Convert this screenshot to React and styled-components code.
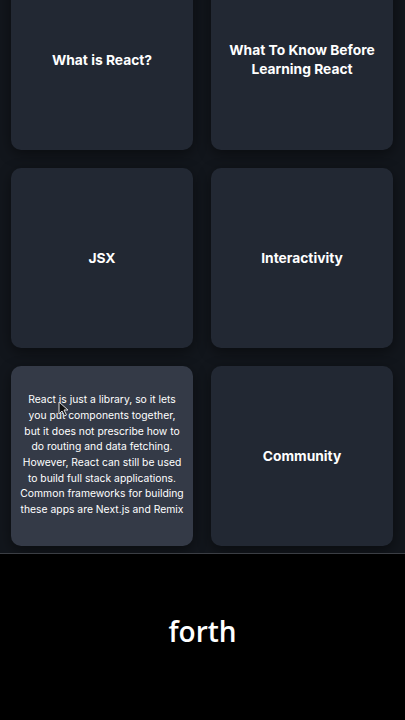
import React from "react";
import styled, { createGlobalStyle } from "styled-components";

const Global = createGlobalStyle`
  html, body { margin: 0; padding: 0; background: #000; }
  body { width: 405px; height: 720px; overflow: hidden; }
`;

const Page = styled.div`
  width: 405px;
  height: 720px;
  display: flex;
  flex-direction: column;
  background: #000;
`;

const Viewport = styled.div`
  height: 553px;
  overflow: hidden;
  background: #12161c;
  border-bottom: 1px solid #3b3e44;
  position: relative;
`;

const Grid = styled.div`
  display: grid;
  grid-template-columns: 182px 182px;
  grid-auto-rows: 180px;
  gap: 18px;
  padding: 0 11px;
  margin-top: -30px;
`;

const Card = styled.div`
  background: ${(p) => (p.$flipped ? "#343a47" : "#222833")};
  border-radius: 10px;
  box-shadow: 0 4px 14px rgba(0, 0, 0, 0.45);
  display: flex;
  align-items: center;
  justify-content: center;
  text-align: center;
  padding: 0 6px;
  box-sizing: border-box;
  position: relative;
`;

const Title = styled.div`
  font-family: Inter, "Liberation Sans", sans-serif;
  font-weight: 700;
  font-size: 13.8px;
  line-height: 19px;
  color: #fff;
`;

const Body = styled.div`
  font-family: Inter, "Liberation Sans", sans-serif;
  font-weight: 400;
  font-size: 10.35px;
  line-height: 15.7px;
  color: #fff;
  white-space: nowrap;
  margin-top: -2px;
`;

const Footer = styled.div`
  flex: 1;
  display: flex;
  align-items: flex-start;
  justify-content: center;
  padding-top: 58px;
  font-family: "Open Sans", "Noto Sans", sans-serif;
  font-weight: 600;
  font-size: 28px;
  color: #fff;
`;

const Cursor = styled.svg`
  position: absolute;
  left: 58px;
  top: 401px;
  width: 11px;
  height: 16px;
`;

const lines = [
  "React is just a library, so it lets",
  "you put components together,",
  "but it does not prescribe how to",
  "do routing and data fetching.",
  "However, React can still be used",
  "to build full stack applications.",
  "Common frameworks for building",
  "these apps are Next.js and Remix",
];

export default function App() {
  return (
    <Page>
      <Global />
      <Viewport>
        <Grid>
          <Card><Title>What is React?</Title></Card>
          <Card><Title>What To Know Before<br />Learning React</Title></Card>
          <Card><Title>JSX</Title></Card>
          <Card><Title>Interactivity</Title></Card>
          <Card $flipped>
            <Body>
              {lines.map((l, i) => (
                <React.Fragment key={i}>
                  {l}
                  {i < lines.length - 1 && <br />}
                </React.Fragment>
              ))}
            </Body>
          </Card>
          <Card><Title>Community</Title></Card>
        </Grid>
        <Cursor viewBox="0 0 11 16">
          <path d="M1 1 L1 13 L4 10 L6.5 15 L8.5 14 L6 9 L10 9 Z" fill="#111" stroke="#ddd" strokeWidth="1" strokeLinejoin="round" />
        </Cursor>
      </Viewport>
      <Footer>forth</Footer>
    </Page>
  );
}
